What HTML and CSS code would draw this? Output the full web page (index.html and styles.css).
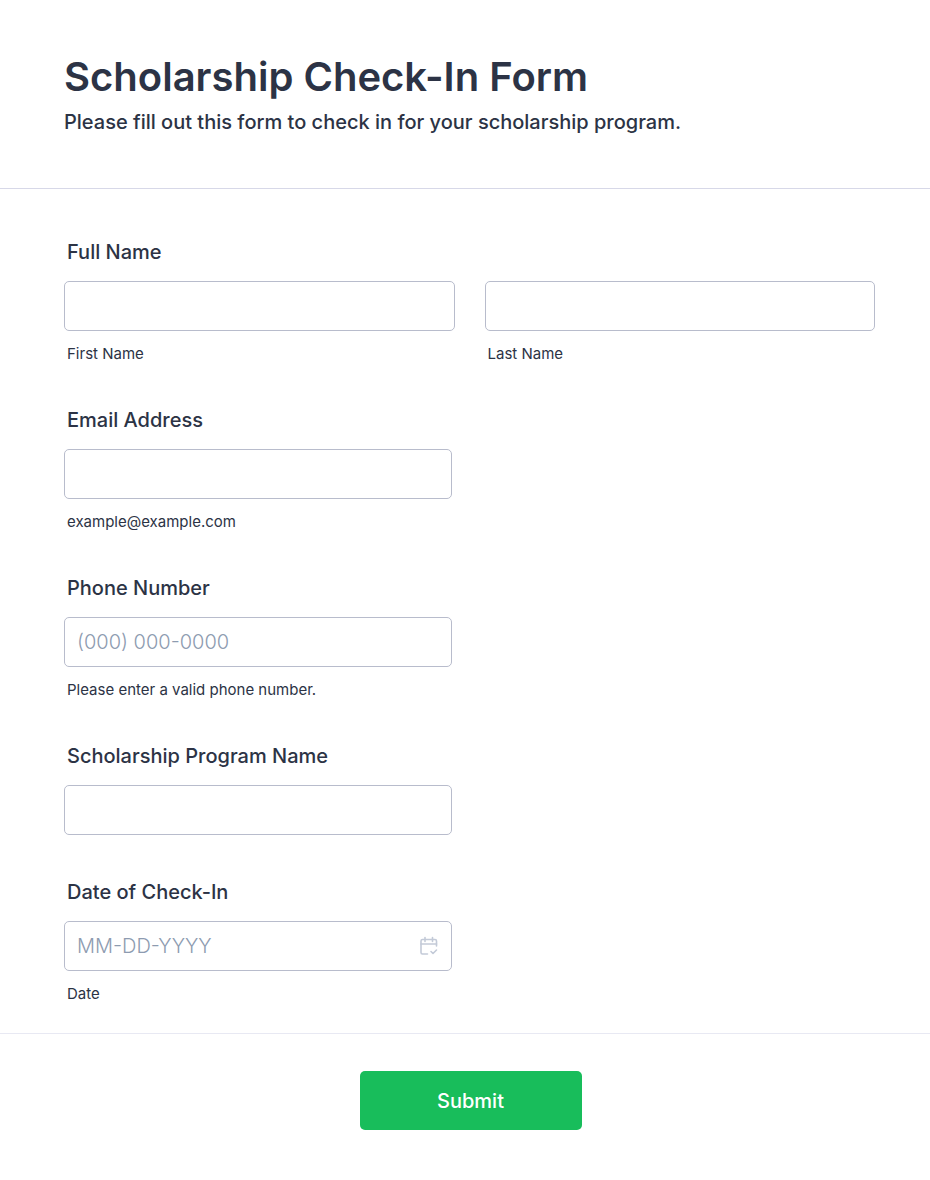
FILE: index.html
```html
<!DOCTYPE html>
<html lang="en">
<head>
    <meta charset="UTF-8">
    <meta name="viewport" content="width=device-width, initial-scale=1.0">
    <title>Scholarship Check-In Form</title>
    <link rel="stylesheet" href="styles.css">
</head>
<body>
    <form class="form">
        <header class="form-header">
            <h1>Scholarship Check-In Form</h1>
            <p>Please fill out this form to check in for your scholarship program.</p>
        </header>

        <div class="form-fields">
            <div class="field" role="group" aria-labelledby="full-name">
                <span class="field-label" id="full-name">Full Name</span>
                <div class="name-row">
                    <div class="name-col">
                        <input type="text" id="first-name" class="text-input">
                        <label class="sub-label" for="first-name">First Name</label>
                    </div>
                    <div class="name-col">
                        <input type="text" id="last-name" class="text-input">
                        <label class="sub-label" for="last-name">Last Name</label>
                    </div>
                </div>
            </div>

            <div class="field">
                <label class="field-label" for="email">Email Address</label>
                <input type="email" id="email" class="text-input short">
                <label class="sub-label" for="email">example@example.com</label>
            </div>

            <div class="field">
                <label class="field-label" for="phone">Phone Number</label>
                <input type="tel" id="phone" class="text-input short" placeholder="(000) 000-0000">
                <label class="sub-label" for="phone">Please enter a valid phone number.</label>
            </div>

            <div class="field">
                <label class="field-label" for="program">Scholarship Program Name</label>
                <input type="text" id="program" class="text-input short">
            </div>

            <div class="field">
                <label class="field-label" for="date">Date of Check-In</label>
                <div class="date-box short">
                    <input type="text" id="date" class="text-input" placeholder="MM-DD-YYYY">
                    <button type="button" class="date-btn" aria-label="Choose date">
                        <svg width="20" height="20" viewBox="0 0 20 20" fill="none" stroke="currentColor" stroke-width="1.6" stroke-linecap="round" stroke-linejoin="round">
                            <path d="M8.5 18H3.5A1.5 1.5 0 0 1 2 16.5V5a1.5 1.5 0 0 1 1.5-1.5h12.5A1.5 1.5 0 0 1 17.500 5v5"/>
                            <path d="M2 8h15.500M6 1.500v4M13.500 1.500v4M12 15.500l2 2 3.500-3.500"/>
                        </svg>
                    </button>
                </div>
                <label class="sub-label" for="date">Date</label>
            </div>
        </div>

        <div class="form-footer">
            <button type="submit" class="submit-btn">Submit</button>
        </div>
    </form>
</body>
</html>
```
FILE: styles.css
```css
* {
    box-sizing: border-box;
}

body {
    margin: 0;
    background-color: #fff;
    color: #2c3345;
    font-family: 'Inter', sans-serif;
}

.form-header {
    padding: 52px 55px 53px 64px;
    border-bottom: 1px solid #d7d8e8;
}

h1 {
    margin: 0;
    font-size: 40px;
    line-height: 50px;
    font-weight: 600;
}

.form-header p {
    margin: 7px 0 0;
    font-size: 20px;
    line-height: 26px;
    font-weight: 500;
}

.form-fields {
    display: flex;
    flex-direction: column;
    gap: 45px;
    padding: 51px 55px 30px 64px;
}

.field {
    display: flex;
    flex-direction: column;
}

.field-label {
    margin-bottom: 17px;
    padding-left: 3px;
    font-size: 20px;
    line-height: 24px;
    font-weight: 500;
}

.name-row {
    display: flex;
    gap: 30px;
}

.name-col {
    display: flex;
    flex: 1;
    flex-direction: column;
}

.text-input {
    width: 100%;
    height: 50px;
    padding: 0 12px;
    border: 1px solid #b8bccc;
    border-radius: 5px;
    background-color: #fff;
    color: #2c3345;
    font-family: inherit;
    font-size: 20px;
}

.text-input::placeholder {
    color: #8d9bb0;
    font-weight: 300;
    opacity: 1;
}

.text-input:focus {
    border-color: #18bd5b;
    outline: none;
}

.short {
    max-width: 388px;
}

.sub-label {
    margin-top: 14px;
    padding-left: 3px;
    font-size: 15px;
    line-height: 18px;
}

.date-box {
    position: relative;
}

.date-btn {
    position: absolute;
    top: 15px;
    right: 13px;
    display: flex;
    padding: 0;
    border: none;
    background: none;
    color: #c3cad8;
    cursor: pointer;
}

.form-footer {
    display: flex;
    justify-content: center;
    padding: 37px 53px 50px 64px;
    border-top: 1px solid #e8e9f3;
}

.submit-btn {
    min-width: 222px;
    height: 59px;
    border: none;
    border-radius: 5px;
    background-color: #18bd5b;
    color: #fff;
    font-family: inherit;
    font-size: 20px;
    font-weight: 500;
    cursor: pointer;
}

.submit-btn:hover {
    background-color: #16aa52;
}
```
